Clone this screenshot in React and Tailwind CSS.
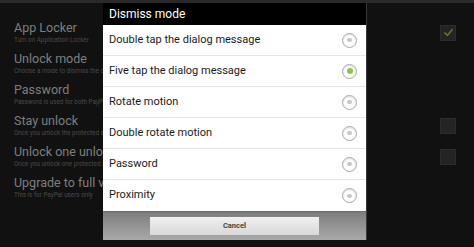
import React from 'react';

const settings = [
    { title: 'App Locker', desc: 'Turn on Application Locker', check: 'on' },
    { title: 'Unlock mode', desc: 'Choose a mode to dismiss the dialog' },
    { title: 'Password', desc: 'Password is used for both PayPal and free users' },
    { title: 'Stay unlock', desc: 'Once you unlock the protected app, it stays unlocked', check: 'off' },
    { title: 'Unlock one unlock all', desc: 'Once you unlock one protected app, all are unlocked', check: 'off' },
    { title: 'Upgrade to full version', desc: 'This is for PayPal users only' },
];

const modes = [
    'Double tap the dialog message',
    'Five tap the dialog message',
    'Rotate motion',
    'Double rotate motion',
    'Password',
    'Proximity',
];

function Radio({ selected }) {
    return (
        <div className="w-[15px] h-[15px] rounded-full border border-[#a8a8a8] bg-white flex items-center justify-center shadow-[inset_0_1px_2px_rgba(0,0,0,0.15)]">
            {selected
                ? <div className="w-[6px] h-[6px] rounded-full bg-[#8cc63f]" />
                : <div className="w-[5px] h-[4px] rounded-full bg-[#c8c8c8]" />}
        </div>
    );
}

export default function App() {
    return (
        <div className="relative w-[474px] h-[247px] overflow-hidden bg-[#111112] font-['Roboto',sans-serif]">
            <div className="h-[3px] bg-[#2a2a2a]" />

            {/* Settings list behind the dialog, clipped at the dialog edge */}
            <div className="pt-[14px] pl-[14px] pr-[18px]">
                {settings.map((s) => (
                    <div key={s.title} className="h-[31px] flex items-center justify-between">
                        <div className="flex flex-col w-[89px] overflow-hidden whitespace-nowrap">
                            <span className="text-[12.5px] leading-[15px] text-[#7e7e7e]">{s.title}</span>
                            <span className="text-[6.3px] leading-[10px] text-[#4a4a4a]">{s.desc}</span>
                        </div>
                        {s.check && (
                            <div className="w-[16px] h-[16px] bg-[#242424] border border-[#2c2c2c] flex items-center justify-center">
                                {s.check === 'on' && (
                                    <svg width="11" height="11" viewBox="0 0 12 12">
                                        <path d="M2 6.5 L4.8 9 L10 3" fill="none" stroke="#66713a" strokeWidth="1.8" strokeLinecap="round" />
                                    </svg>
                                )}
                            </div>
                        )}
                    </div>
                ))}
            </div>

            {/* Dismiss mode dialog */}
            <div className="absolute left-[103px] top-[3px] w-[263px] flex flex-col shadow-[1px_0_0_#3a3a3a]">
                <div className="h-[22px] bg-black flex items-center px-[6px] text-white text-[12px]">
                    Dismiss mode
                </div>
                <div className="bg-white">
                    {modes.map((m, i) => (
                        <div
                            key={m}
                            className={`h-[31px] flex items-center justify-between pl-[6px] pr-[9px] ${i < modes.length - 1 ? 'border-b border-[#e6e6e6]' : ''}`}
                        >
                            <span className="text-[11px] text-[#1a1a1a]">{m}</span>
                            <Radio selected={i === 1} />
                        </div>
                    ))}
                </div>
                <div className="h-[29px] bg-gradient-to-b from-[#7e7e7e] to-[#a9a9a9] border-t border-[#6a6a6a] flex items-start pt-[5px] pl-[47px]">
                    <div className="w-[169px] h-[18px] bg-gradient-to-b from-[#f0f0f0] to-[#d8d8d8] flex items-center justify-center text-[7.5px] font-bold text-[#444]">
                        Cancel
                    </div>
                </div>
            </div>
        </div>
    );
}
